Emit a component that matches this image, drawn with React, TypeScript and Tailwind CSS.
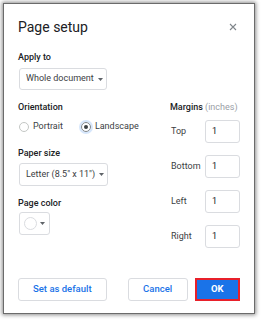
import React from "react";

const Caret = () => (
  <svg width="5" height="3" viewBox="0 0 5 3" className="shrink-0">
    <path d="M0 0 L5 0 L2.5 3 Z" fill="#5f6368" />
  </svg>
);

const Radio = ({ checked }: { checked?: boolean }) => (
  <span
    className={
      "flex items-center justify-center w-[10px] h-[10px] rounded-full border border-[#80868b] " +
      (checked ? "shadow-[0_0_0_2px_rgba(26,115,232,0.18)] border-[#5f6368]" : "border-[#c4c7c5]")
    }
  >
    {checked && <span className="w-[4px] h-[4px] rounded-full bg-[#3c4043]" />}
  </span>
);

const MarginRow = ({ label }: { label: string }) => (
  <div className="flex items-center h-[23px]">
    <span className="w-[34px] text-[9px] text-[#3c4043]">{label}</span>
    <div className="w-[35px] h-[23px] border border-[#dadce0] rounded-[3px] flex items-center pl-[6px] text-[9px] text-[#202124]">
      1
    </div>
  </div>
);

export default function App() {
  return (
    <div
      className="w-[261px] h-[320px] bg-white pt-[3px] pl-[3px]"
      style={{ fontFamily: "Roboto, 'Noto Sans', sans-serif" }}
    >
      <div className="w-[252px] h-[311px] bg-white border border-[#6b6b6b] shadow-[0_0_4px_1px_rgba(0,0,0,0.45)] pt-[14px] pl-[14px] pr-[14px] flex flex-col">
        <div className="flex items-center justify-between h-[18px]">
          <span className="text-[14px] text-[#202124] leading-[18px]">Page setup</span>
          <svg width="8" height="8" viewBox="0 0 8 8" className="mr-[3px]">
            <path d="M1 1 L7 7 M7 1 L1 7" stroke="#80868b" strokeWidth="1.1" />
          </svg>
        </div>

        <div className="mt-[15px] text-[9px] leading-[12px] font-medium text-[#202124]">Apply to</div>
        <div className="mt-[5px] ml-[1px] w-[88px] h-[22px] border border-[#dadce0] rounded-[3px] flex items-center pl-[6px] gap-[4px]">
          <span className="text-[9px] text-[#3c4043]">Whole document</span>
          <Caret />
        </div>

        <div className="mt-[11px] flex">
          <div className="w-[154px] flex flex-col">
            <div className="text-[9px] leading-[12px] font-medium text-[#202124]">Orientation</div>
            <div className="mt-[7px] h-[14px] flex items-center ml-[1px]">
              <Radio />
              <span className="ml-[4px] text-[9px] text-[#3c4043]">Portrait</span>
              <span className="ml-[18px]">
                <Radio checked />
              </span>
              <span className="ml-[4px] text-[9px] text-[#3c4043]">Landscape</span>
            </div>

            <div className="mt-[13px] text-[9px] leading-[12px] font-medium text-[#202124]">Paper size</div>
            <div className="mt-[4px] ml-[1px] w-[89px] h-[23px] border border-[#dadce0] rounded-[3px] flex items-center pl-[6px] gap-[4px]">
              <span className="text-[9px] text-[#3c4043]">Letter (8.5" x 11")</span>
              <Caret />
            </div>

            <div className="mt-[11px] text-[9px] leading-[12px] font-medium text-[#202124]">Page color</div>
            <div className="mt-[3px] ml-[1px] w-[31px] h-[23px] border border-[#dadce0] rounded-[3px] flex items-center pl-[4px] gap-[3px]">
              <span className="w-[13px] h-[13px] rounded-full border border-[#dadce0] bg-white" />
              <Caret />
            </div>
          </div>

          <div className="flex flex-col">
            <div className="text-[9px] leading-[12px] text-[#202124]">
              <span className="font-medium">Margins</span>{" "}
              <span className="text-[#9aa0a6]">(inches)</span>
            </div>
            <div className="mt-[7px] flex flex-col gap-[12px] ml-[1px]">
              <MarginRow label="Top" />
              <MarginRow label="Bottom" />
              <MarginRow label="Left" />
              <MarginRow label="Right" />
            </div>
          </div>
        </div>

        <div className="mt-auto mb-[12px] flex items-center">
          <button className="w-[90px] h-[23px] border border-[#dadce0] rounded-[3px] text-[9.5px] font-medium text-[#1a73e8]">
            Set as default
          </button>
          <button className="ml-[21px] w-[61px] h-[23px] border border-[#dadce0] rounded-[3px] text-[9.5px] font-medium text-[#1a73e8]">
            Cancel
          </button>
          <button className="ml-[7px] w-[46px] h-[23px] border-2 border-[#e8202a] bg-[#1a73e8] text-[9.5px] font-bold text-white">
            OK
          </button>
        </div>
      </div>
    </div>
  );
}
